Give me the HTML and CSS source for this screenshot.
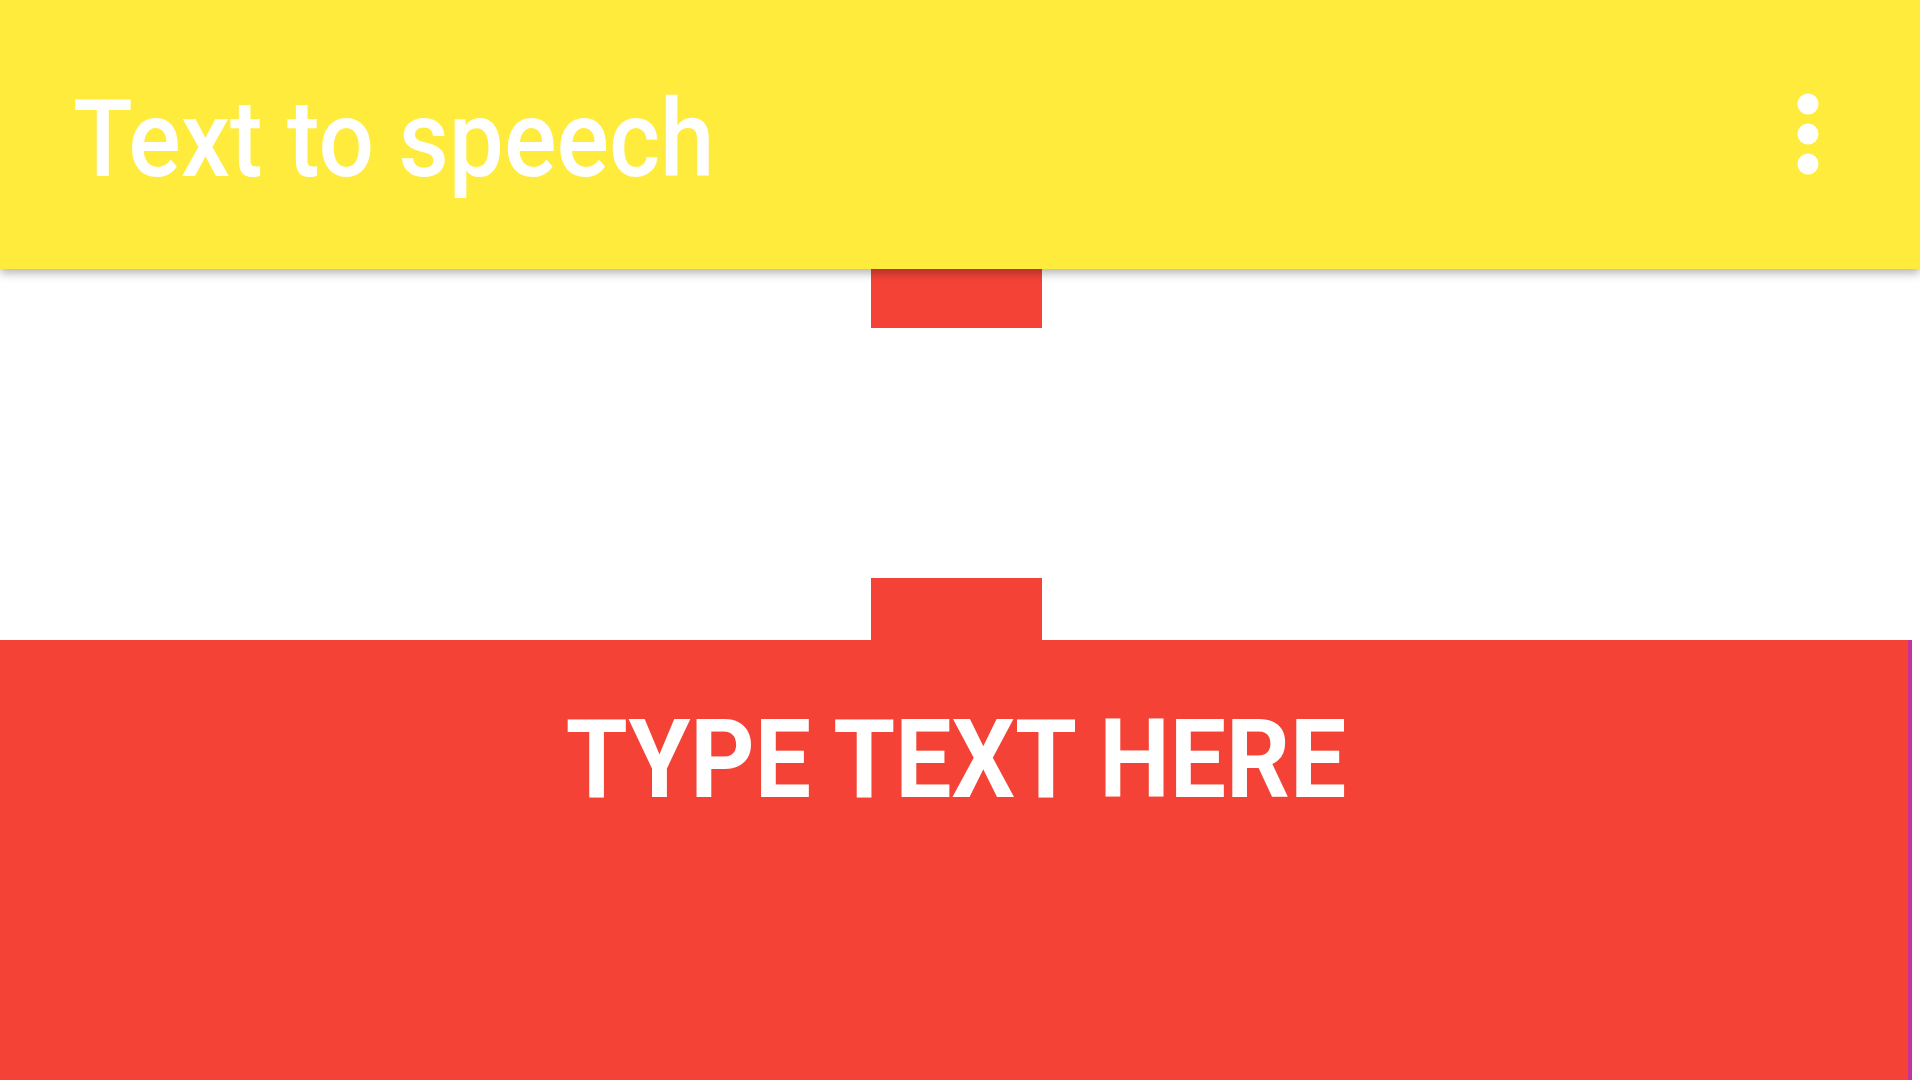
FILE: index.html
```html
<!DOCTYPE html>
<html lang="en">
<head>
<meta charset="utf-8">
<title>Text to speech</title>
<link rel="stylesheet" href="styles.css">
</head>
<body>
<div class="app">
  <header class="toolbar">
    <h1 class="title">Text to speech</h1>
    <button class="menu" aria-label="More options">
      <svg width="24" height="84" viewBox="0 0 24 84">
        <circle cx="12" cy="11" r="10.5" fill="#fff"/>
        <circle cx="12" cy="41" r="10.5" fill="#fff"/>
        <circle cx="12" cy="71" r="10.5" fill="#fff"/>
      </svg>
    </button>
  </header>
  <main class="content">
    <div class="tab tab-top"></div>
    <div class="tab tab-bottom"></div>
  </main>
  <section class="input-band">
    <span class="prompt">TYPE TEXT HERE</span>
  </section>
</div>
</body>
</html>
```

FILE: styles.css
```css
html, body {
  margin: 0;
  padding: 0;
  height: 100%;
  background: #ffffff;
}

.app {
  display: flex;
  flex-direction: column;
  height: 1080px;
  width: 1920px;
  overflow: hidden;
  font-family: Roboto, "Liberation Sans", sans-serif;
}

.toolbar {
  position: relative;
  z-index: 2;
  display: flex;
  align-items: center;
  justify-content: space-between;
  height: 269px;
  flex: 0 0 269px;
  padding: 0 100px 0 73px;
  box-sizing: border-box;
  background: #ffeb3b;
  box-shadow: 0 4px 9px rgba(0, 0, 0, 0.3);
}

.title {
  margin: 10px 0 0 0;
  color: #ffffff;
  font-weight: 500;
  font-size: 98px;
  line-height: 1;
  transform: scaleY(1.1);
  transform-origin: left center;
}

.menu {
  display: flex;
  padding: 0;
  margin: 0;
  border: 0;
  background: none;
}

.content {
  display: flex;
  flex-direction: column;
  justify-content: space-between;
  align-items: center;
  flex: 0 0 371px;
  background: #ffffff;
}

.tab {
  width: 171px;
  margin-left: -7px;
  background: #f44336;
}

.tab-top {
  height: 59px;
}

.tab-bottom {
  height: 62px;
}

.input-band {
  flex: 1;
  display: flex;
  justify-content: center;
  align-items: flex-start;
  padding-top: 70px;
  background: #f44336;
  border-right: 4px solid #c2349a;
  margin-right: 8px;
}

.prompt {
  color: #ffffff;
  font-weight: 700;
  font-size: 100px;
  line-height: 1;
  margin-left: 4px;
  transform: scaleY(1.1);
}
```
